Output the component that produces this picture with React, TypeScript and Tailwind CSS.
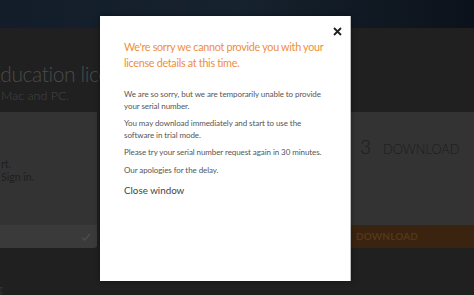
import React from "react";

export default function App() {
  const font = { fontFamily: 'Lato, "Open Sans", sans-serif' };
  return (
    <div className="relative w-[474px] h-[295px] overflow-hidden bg-[#202020]" style={font}>
      {/* top photo strip */}
      <div className="h-[28px] bg-gradient-to-r from-[#121d29] via-[#16222e] to-[#0c121b]" />
      {/* heading band */}
      <div className="h-[84px] bg-[#202020] pt-[33px] overflow-hidden whitespace-nowrap">
        <div className="-ml-[11px] text-[21px] leading-[26px] font-light tracking-[-0.4px] text-[#4a4a4a]">Education licenses</div>
        <div className="ml-[1px] text-[12.5px] leading-[16px] font-light text-[#454545] mt-[1px]">Mac and PC.</div>
      </div>
      {/* cards row */}
      <div className="flex gap-[8px]">
        <div className="w-[97px] flex flex-col rounded-br-[3px] overflow-hidden">
          <div className="h-[113px] bg-[#333333] pt-[46px] text-[10.5px] leading-[13px] text-[#1e1e1e] whitespace-nowrap">
            <div className="ml-[1px]">rt.</div>
            <div className="ml-[1px]">Sign in.</div>
          </div>
          <div className="h-[23px] bg-[#3a3a3a] flex items-center justify-end pr-[6px]">
            <svg width="10" height="8" viewBox="0 0 10 8">
              <path d="M1 4.5 L3.8 7 L9 1" fill="none" stroke="#4c4c4c" strokeWidth="1.6" />
            </svg>
          </div>
        </div>
        <div className="flex-1 flex flex-col">
          <div className="h-[113px] bg-[#333333]" />
          <div className="h-[23px] bg-[#3a3a3a]" />
        </div>
        <div className="w-[140px] flex flex-col">
          <div className="h-[113px] bg-[#333333] pt-[25px] pl-[26px] flex items-baseline gap-[12px] text-[#1c1c1c] whitespace-nowrap">
            <span className="text-[19px] leading-[20px] font-light">3</span>
            <span className="text-[12.8px] leading-[20px] font-light">DOWNLOAD</span>
          </div>
          <div className="h-[23px] bg-[#3a2410] flex items-center pl-[22px]">
            <span className="text-[10px] font-bold text-[#553719] tracking-[0.1px]">DOWNLOAD</span>
          </div>
        </div>
      </div>
      <div className="pt-[34px] text-[11px] text-[#333] leading-[13px]">
        <span className="-ml-[3px]">g</span>
      </div>

      {/* modal */}
      <div className="absolute left-[100px] top-[16px] w-[251px] h-[265px] bg-white border-r border-[#bdbdbd] shadow-[0_0_6px_rgba(0,0,0,0.4)]">
        <button className="absolute right-[8px] top-[10px] w-[10px] h-[10px] flex items-center justify-center">
          <svg width="9" height="9" viewBox="0 0 9 9">
            <path d="M1 1 L8 8 M8 1 L1 8" stroke="#1f1f1f" strokeWidth="1.8" />
          </svg>
        </button>
        <div className="pl-[24px] pr-[20px] pt-[23px]">
          <div className="text-[10.8px] leading-[16px] tracking-[-0.3px] text-[#ef8e3c] whitespace-nowrap">
            <div>We're sorry we cannot provide you with your</div>
            <div>license details at this time.</div>
          </div>
          <div className="mt-[17px] text-[8px] leading-[12px] tracking-[-0.08px] text-[#555] whitespace-nowrap">
            <p>We are so sorry, but we are temporarily unable to provide</p>
            <p>your serial number.</p>
            <p className="mt-[5px]">You may download immediately and start to use the</p>
            <p>software in trial mode.</p>
            <p className="mt-[5px]">Please try your serial number request again in 30 minutes.</p>
            <p className="mt-[6px]">Our apologies for the delay.</p>
          </div>
          <div className="mt-[7px] text-[9.8px] leading-[14px] text-[#444]">Close window</div>
        </div>
      </div>
    </div>
  );
}
